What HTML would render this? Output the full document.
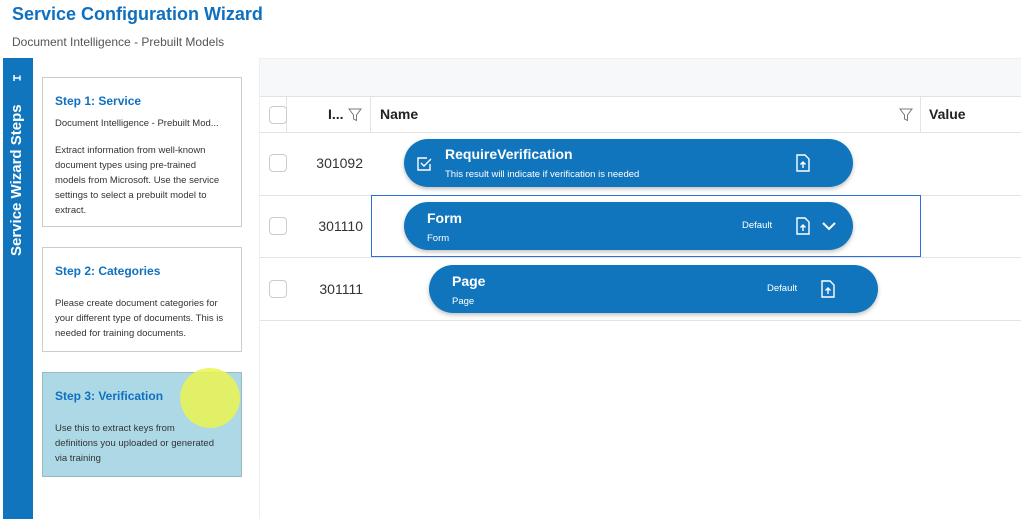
<!DOCTYPE html><html><head><style>
*{box-sizing:border-box;margin:0;padding:0}
body{width:1021px;height:519px;overflow:hidden;background:#fff;font-family:"Liberation Sans",sans-serif;position:relative;color:#333}
.a{position:absolute}
.card{position:absolute;left:42px;width:200px;border:1px solid #ccc;background:#fff;padding:16px 12px}
.card h3{font-size:12px;color:#1070c0;font-weight:bold;margin-bottom:8px}
.card p{font-size:9.5px;line-height:15px;color:#333}
.cb{position:absolute;left:269px;width:18px;height:18px;border:1px solid #ccc;border-radius:4px;background:#fff}
.id{position:absolute;left:290px;width:73px;text-align:right;font-size:14px;color:#333}
.pill{position:absolute;height:48px;background:#1175bd;border-radius:24px;color:#fff;box-shadow:0 2px 4px rgba(0,0,0,.25)}
.pill b{position:absolute;font-size:14px}
.pill s{position:absolute;font-size:9.5px;text-decoration:none}
.line{position:absolute;left:260px;right:0;height:1px;background:#e3e3e3}
</style></head><body>
<div class="a" style="left:12px;top:4px;font-size:18px;font-weight:bold;color:#1070c0">Service Configuration Wizard</div>
<div class="a" style="left:12px;top:35px;font-size:12px;color:#555">Document Intelligence - Prebuilt Models</div>
<div class="a" style="left:3px;top:58px;width:30px;height:461px;background:#1175bd"></div>
<div class="a" style="left:-82px;top:146px;width:200px;height:20px;transform:rotate(-90deg);color:#fff;font-weight:bold;font-size:15px;white-space:nowrap;text-align:left">Service Wizard Steps</div>
<svg class="a" style="left:13px;top:74px" width="10" height="8" viewBox="0 0 10 8"><path d="M1 1v6M1 4h6M7 1.5v5" stroke="#fff" stroke-width="1.5" fill="none"/></svg>
<div class="a" style="left:33px;top:58px;width:227px;height:461px;border-right:1px solid #eee"></div>
<div class="card" style="top:77px;height:150px"><h3>Step 1: Service</h3><p style="margin-bottom:12px">Document Intelligence - Prebuilt Mod...</p><p>Extract information from well-known document types using pre-trained models from Microsoft. Use the service settings to select a prebuilt model to extract.</p></div>
<div class="card" style="top:247px;height:105px"><h3>Step 2: Categories</h3><p style="margin-top:18px">Please create document categories for your different type of documents. This is needed for training documents.</p></div>
<div class="card" style="top:372px;height:105px;background:#add8e6;border-color:#9bb"><h3>Step 3: Verification</h3><p style="margin-top:18px;white-space:nowrap">Use this to extract keys from<br>definitions you uploaded or generated<br>via training</p></div>
<div class="a" style="left:180px;top:368px;width:60px;height:60px;border-radius:50%;background:rgba(235,245,80,.85)"></div>
<div class="a" style="left:260px;top:58px;right:0;height:38px;background:#f7f8fa;border-top:1px solid #eee"></div>
<div class="line" style="top:96px"></div><div class="line" style="top:132px"></div><div class="line" style="top:195px"></div><div class="line" style="top:257px"></div><div class="line" style="top:320px"></div>
<div class="a" style="left:286px;top:96px;width:1px;height:36px;background:#e3e3e3"></div>
<div class="a" style="left:370px;top:96px;width:1px;height:36px;background:#e3e3e3"></div>
<div class="a" style="left:920px;top:96px;width:1px;height:36px;background:#e3e3e3"></div>
<div class="cb" style="top:106px"></div><div class="cb" style="top:154px"></div><div class="cb" style="top:217px"></div><div class="cb" style="top:280px"></div>
<div class="a" style="left:328px;top:106px;font-size:14px;font-weight:bold;color:#222">I...</div>
<svg class="a" style="left:348px;top:108px" width="14" height="14" viewBox="0 0 14 14"><path d="M1 1h12L8.5 7v5.5L5.5 11V7z" fill="none" stroke="#777"/></svg>
<div class="a" style="left:380px;top:106px;font-size:14px;font-weight:bold;color:#222">Name</div>
<svg class="a" style="left:899px;top:108px" width="14" height="14" viewBox="0 0 14 14"><path d="M1 1h12L8.5 7v5.5L5.5 11V7z" fill="none" stroke="#777"/></svg>
<div class="a" style="left:929px;top:106px;font-size:14px;font-weight:bold;color:#222">Value</div>
<div class="id" style="top:155px">301092</div><div class="id" style="top:218px">301110</div><div class="id" style="top:281px">301111</div>
<div class="a" style="left:371px;top:195px;width:550px;height:62px;border:1px solid #2a70e0"></div>
<div class="pill" style="left:404px;top:139px;width:449px"><svg class="a" style="left:12px;top:17px" width="16" height="16" viewBox="0 0 16 16"><path d="M14 8v6H2V2h9" fill="none" stroke="#fff" stroke-width="1.4"/><path d="M5 7l3 3 7-7" fill="none" stroke="#fff" stroke-width="1.4"/></svg><b style="left:41px;top:7px">RequireVerification</b><s style="left:41px;top:30px">This result will indicate if verification is needed</s><svg class="a" style="left:392px;top:15px" width="14" height="18" viewBox="0 0 14 18"><path d="M1 1h8l4 4v12H1z" fill="none" stroke="#fff" stroke-width="1.4"/><path d="M7 14V8M4.5 10.5L7 8l2.5 2.5" fill="none" stroke="#fff" stroke-width="1.4"/></svg></div>
<div class="pill" style="left:404px;top:202px;width:449px"><b style="left:23px;top:8px">Form</b><s style="left:23px;top:31px">Form</s><s style="left:338px;top:18px">Default</s><svg class="a" style="left:392px;top:15px" width="14" height="18" viewBox="0 0 14 18"><path d="M1 1h8l4 4v12H1z" fill="none" stroke="#fff" stroke-width="1.4"/><path d="M7 14V8M4.5 10.5L7 8l2.5 2.5" fill="none" stroke="#fff" stroke-width="1.4"/></svg><svg class="a" style="left:418px;top:19px" width="14" height="10" viewBox="0 0 14 10"><path d="M1 2l6 6 6-6" fill="none" stroke="#fff" stroke-width="2"/></svg></div>
<div class="pill" style="left:429px;top:265px;width:449px"><b style="left:23px;top:8px">Page</b><s style="left:23px;top:31px">Page</s><s style="left:338px;top:18px">Default</s><svg class="a" style="left:392px;top:15px" width="14" height="18" viewBox="0 0 14 18"><path d="M1 1h8l4 4v12H1z" fill="none" stroke="#fff" stroke-width="1.4"/><path d="M7 14V8M4.5 10.5L7 8l2.5 2.5" fill="none" stroke="#fff" stroke-width="1.4"/></svg></div>
</body></html>
